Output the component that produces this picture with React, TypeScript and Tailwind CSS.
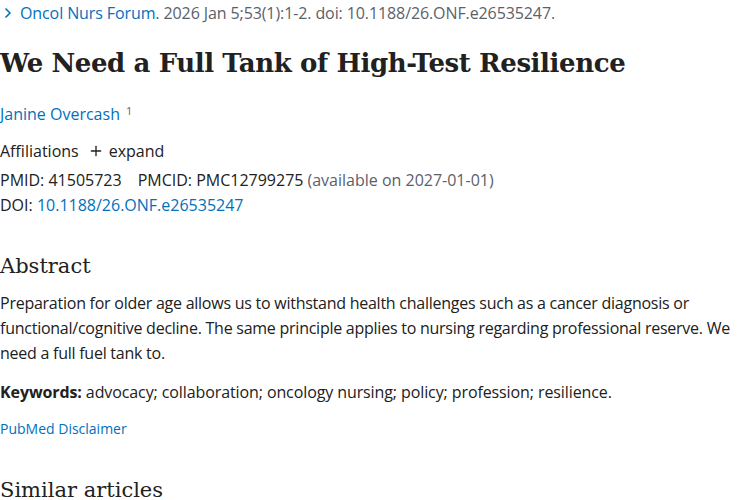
import { ChevronRight, Plus } from "lucide-react";

const sans = "font-['Open_Sans','Noto_Sans',sans-serif]";
const serif = "font-['DejaVu_Serif','Liberation_Serif',serif]";

const Article = () => {
  return (
    <div className={`min-h-screen bg-white text-[#212121] ${sans}`}>
      <div className="flex items-center gap-1 pt-[1px] text-[16px] leading-6 tracking-[-0.1px] text-[#5b616b]">
        <ChevronRight className="h-4 w-4 text-[#0071bc]" strokeWidth={2.5} />
        <span className="text-[#0071bc]">Oncol Nurs Forum.</span>
        <span>2026 Jan 5;53(1):1-2. doi: 10.1188/26.ONF.e26535247.</span>
      </div>

      <h1 className={`mt-[20px] text-[26px] leading-9 font-bold tracking-[-0.4px] ${serif}`}>
        We Need a Full Tank of High-Test Resilience
      </h1>

      <div className="mt-[21px] text-[16px] leading-6">
        <span className="text-[#0071bc]">Janine Overcash</span>
        <sup className="ml-[6px] text-[11px] text-[#5b616b]">1</sup>
      </div>

      <div className="mt-[13px] flex items-center text-[16px] leading-6">
        <span>Affiliations</span>
        <Plus className="ml-[9px] mr-[5px] h-4 w-4" strokeWidth={2} />
        <span>expand</span>
      </div>

      <div className="mt-[5px] text-[16px] leading-6">
        <span>PMID: 41505723</span>
        <span className="ml-[16px]">PMCID: PMC12799275</span>
        <span className="ml-1 text-[#5b616b]">(available on 2027-01-01)</span>
      </div>
      <div className="mt-[1px] text-[16px] leading-6">
        DOI: <span className="text-[#0071bc]">10.1188/26.ONF.e26535247</span>
      </div>

      <h2 className={`mt-[33px] text-[21px] leading-8 ${serif}`}>Abstract</h2>

      <p className="mt-[9px] text-[16px] leading-[25px] tracking-[-0.25px]">
        Preparation for older age allows us to withstand health challenges such as a cancer diagnosis or
        functional/cognitive decline. The same principle applies to nursing regarding professional reserve. We
        need a full fuel tank to.
      </p>

      <p className="mt-[14px] text-[16px] leading-6 tracking-[-0.1px]">
        <span className="font-bold">Keywords:</span> advocacy; collaboration; oncology nursing; policy;
        profession; resilience.
      </p>

      <div className="mt-[13px] text-[14px] leading-6 text-[#0071bc]">PubMed Disclaimer</div>

      <h2 className={`mt-[33px] text-[21px] leading-8 ${serif}`}>Similar articles</h2>
    </div>
  );
};

export default function App() {
  return <Article />;
}
